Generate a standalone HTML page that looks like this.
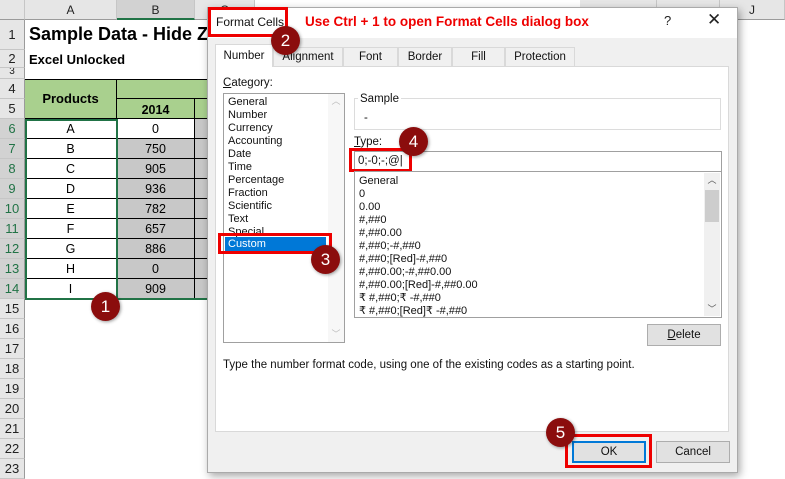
<!DOCTYPE html>
<html><head><meta charset="utf-8"><style>
*{margin:0;padding:0;box-sizing:border-box}
body{width:785px;height:479px;overflow:hidden;background:#fff;font-family:"Liberation Sans",sans-serif;position:relative}
.a{position:absolute}
.rh{position:absolute;left:0;width:25px;background:#e6e6e6;border-bottom:1px solid #c6c6c6;border-right:1px solid #9b9b9b;color:#222;font-size:13px;text-align:center}
.ch{position:absolute;top:0;height:20px;background:#e6e6e6;border-right:1px solid #c6c6c6;border-bottom:1px solid #9b9b9b;font-size:12px;text-align:center;line-height:20px;color:#222}
.cell{position:absolute;font-size:12.5px;text-align:center;line-height:20px;border-bottom:1px solid #000;border-right:1px solid #000}
.d{font-size:11.5px;color:#111}
.li{position:absolute;left:4px;font-size:11px;line-height:13px;color:#111;white-space:nowrap}
.circ{position:absolute;width:29px;height:29px;border-radius:50%;background:#8b0d0d;color:#fff;font-size:17px;text-align:center;line-height:29px;box-shadow:1px 1px 3px rgba(0,0,0,.4)}
.tab{position:absolute;top:47px;height:19px;border:1px solid #d9d9d9;border-bottom:none;background:#f0f0f0;font-size:11.5px;text-align:center;line-height:18px;color:#111}
</style></head><body>
<div class="ch" style="left:0;width:25px;background:#e6e6e6"></div>
<div class="ch" style="left:25px;width:92px">A</div>
<div class="ch" style="left:117px;width:78px;background:#d2d2d2;border-bottom:2px solid #217346">B</div>
<div class="ch" style="left:195px;width:60px">C</div>
<div class="ch" style="left:580px;width:77px"></div>
<div class="ch" style="left:657px;width:63px"></div>
<div class="ch" style="left:720px;width:65px">J</div>
<div class="rh" style="top:20px;height:30px;line-height:30px">1</div>
<div class="rh" style="top:50px;height:18px;line-height:18px">2</div>
<div class="rh" style="top:68px;height:11px;line-height:8px;overflow:hidden;font-size:10px">3</div>
<div class="rh" style="top:79px;height:20px;line-height:20px">4</div>
<div class="rh" style="top:99px;height:20px;line-height:20px">5</div>
<div class="rh" style="top:119px;height:20px;line-height:20px;background:#d2d2d2;color:#217346">6</div>
<div class="rh" style="top:139px;height:20px;line-height:20px;background:#d2d2d2;color:#217346">7</div>
<div class="rh" style="top:159px;height:20px;line-height:20px;background:#d2d2d2;color:#217346">8</div>
<div class="rh" style="top:179px;height:20px;line-height:20px;background:#d2d2d2;color:#217346">9</div>
<div class="rh" style="top:199px;height:20px;line-height:20px;background:#d2d2d2;color:#217346">10</div>
<div class="rh" style="top:219px;height:20px;line-height:20px;background:#d2d2d2;color:#217346">11</div>
<div class="rh" style="top:239px;height:20px;line-height:20px;background:#d2d2d2;color:#217346">12</div>
<div class="rh" style="top:259px;height:20px;line-height:20px;background:#d2d2d2;color:#217346">13</div>
<div class="rh" style="top:279px;height:20px;line-height:20px;background:#d2d2d2;color:#217346">14</div>
<div class="rh" style="top:299px;height:20px;line-height:20px">15</div>
<div class="rh" style="top:319px;height:20px;line-height:20px">16</div>
<div class="rh" style="top:339px;height:20px;line-height:20px">17</div>
<div class="rh" style="top:359px;height:20px;line-height:20px">18</div>
<div class="rh" style="top:379px;height:20px;line-height:20px">19</div>
<div class="rh" style="top:399px;height:20px;line-height:20px">20</div>
<div class="rh" style="top:419px;height:20px;line-height:20px">21</div>
<div class="rh" style="top:439px;height:20px;line-height:20px">22</div>
<div class="rh" style="top:459px;height:20px;line-height:20px">23</div>
<div class="a" style="left:29px;top:24px;font-size:18px;font-weight:bold;white-space:nowrap">Sample Data - Hide Z</div>
<div class="a" style="left:29px;top:52px;font-size:13px;font-weight:bold">Excel Unlocked</div>
<div class="a" style="left:25px;top:79px;width:92px;height:40px;background:#a9d08e;border:1px solid #000;border-left:none;font-size:13px;font-weight:bold;text-align:center;line-height:38px">Products</div>
<div class="a" style="left:117px;top:79px;width:110px;height:20px;background:#a9d08e;border-top:1px solid #000;border-bottom:1px solid #000"></div>
<div class="a" style="left:117px;top:99px;width:78px;height:20px;background:#a9d08e;border-right:1px solid #000;border-bottom:1px solid #000;font-size:12.5px;font-weight:bold;text-align:center;line-height:22px">2014</div>
<div class="a" style="left:195px;top:99px;width:30px;height:20px;background:#a9d08e;border-bottom:1px solid #000"></div>
<div id="rows"></div>
<script>
var p=["A","B","C","D","E","F","G","H","I"],v=["0","750","905","936","782","657","886","0","909"],h="";
for(var i=0;i<9;i++){var t=119+i*20;
h+='<div class="cell" style="left:25px;top:'+t+'px;width:92px;height:20px">'+p[i]+'</div>';
h+='<div class="cell" style="left:117px;top:'+t+'px;width:78px;height:20px;background:'+(i==0?'#fff':'#c8c8c8')+'">'+v[i]+'</div>';
h+='<div class="cell" style="left:195px;top:'+t+'px;width:30px;height:20px;background:#c8c8c8;border-right:none"></div>';}
document.getElementById("rows").innerHTML=h;
</script>
<div class="a" style="left:25px;top:119px;width:93px;height:181px;border:2px solid #217346"></div>
<div class="a" style="left:117px;top:119px;width:100px;height:181px;border-bottom:2px solid #217346"></div>
<div class="a" style="left:207px;top:7px;width:531px;height:466px;background:#f0f0f0;border:1px solid #aaa;box-shadow:2px 3px 8px rgba(0,0,0,.35)">
 <div class="a" style="left:0;top:0;width:529px;height:30px;background:#fff"></div>
</div>
<div class="a" style="left:208px;top:7px;width:80px;height:30px;border:3px solid #ee0000"></div>
<div class="a" style="left:216px;top:15px;font-size:12px;color:#111">Format Cells</div>
<div class="a" style="left:305px;top:14px;font-size:13.5px;font-weight:bold;color:#e00;white-space:nowrap">Use Ctrl + 1 to open Format Cells dialog box</div>
<div class="a" style="left:664px;top:13px;font-size:13px;color:#222">?</div>
<div class="a" style="left:707px;top:10px;font-size:17px;color:#222">✕</div>
<div class="tab" style="left:273px;width:70px">Alignment</div>
<div class="tab" style="left:343px;width:55px">Font</div>
<div class="tab" style="left:398px;width:54px">Border</div>
<div class="tab" style="left:452px;width:53px">Fill</div>
<div class="tab" style="left:505px;width:70px">Protection</div>
<div class="a" style="left:215px;top:66px;width:514px;height:366px;background:#fff;border:1px solid #d9d9d9"></div>
<div class="tab" style="left:215px;top:44px;width:58px;height:23px;background:#fff;line-height:22px">Number</div>
<div class="a d" style="left:223px;top:77px"><u>C</u>ategory:</div>
<div class="a" style="left:223px;top:93px;width:122px;height:250px;border:1px solid #a0a0a0;background:#fff">
 <div class="li" style="top:2px">General</div><div class="li" style="top:15px">Number</div><div class="li" style="top:28px">Currency</div><div class="li" style="top:41px">Accounting</div><div class="li" style="top:54px">Date</div><div class="li" style="top:67px">Time</div><div class="li" style="top:80px">Percentage</div><div class="li" style="top:93px">Fraction</div><div class="li" style="top:106px">Scientific</div><div class="li" style="top:119px">Text</div><div class="li" style="top:132px">Special</div>
 <div class="a" style="left:1px;top:143px;width:101px;height:14px;background:#0078d7"></div>
 <div class="li" style="top:144px;color:#fff">Custom</div>
 <div class="a" style="left:104px;top:0;width:16px;height:248px;background:#f7f7f7;color:#bbb;font-size:9px;text-align:center">︿<div style="position:absolute;bottom:2px;width:16px">﹀</div></div>
</div>
<div class="a" style="left:218px;top:233px;width:114px;height:21px;border:3px solid #ee0000"></div>
<div class="a" style="left:354px;top:98px;width:367px;height:32px;border:1px solid #dcdcdc"></div>
<div class="a d" style="left:358px;top:93px;background:#fff;padding:0 2px">Sample</div>
<div class="a d" style="left:364px;top:112px">-</div>
<div class="a d" style="left:354px;top:136px"><u>T</u>ype:</div>
<div class="a" style="left:354px;top:151px;width:368px;height:21px;border:1px solid #a0a0a0;background:#fff"></div>
<div class="a d" style="left:358px;top:155px">0;-0;-;@|</div>
<div class="a" style="left:349px;top:148px;width:63px;height:24px;border:3px solid #ee0000"></div>
<div class="a" style="left:354px;top:171px;width:368px;height:147px;border:1px solid #a0a0a0;background:#fff">
 <div class="li" style="top:3px">General</div><div class="li" style="top:16px">0</div><div class="li" style="top:29px">0.00</div><div class="li" style="top:42px">#,##0</div><div class="li" style="top:55px">#,##0.00</div><div class="li" style="top:68px">#,##0;-#,##0</div><div class="li" style="top:81px">#,##0;[Red]-#,##0</div><div class="li" style="top:94px">#,##0.00;-#,##0.00</div><div class="li" style="top:107px">#,##0.00;[Red]-#,##0.00</div><div class="li" style="top:120px">₹ #,##0;₹ -#,##0</div><div class="li" style="top:133px">₹ #,##0;[Red]₹ -#,##0</div>
 <div class="a" style="left:349px;top:1px;width:16px;height:143px;background:#f0f0f0;color:#555;font-size:9px;text-align:center">︿<div style="position:absolute;top:17px;left:1px;width:14px;height:32px;background:#cdcdcd"></div><div style="position:absolute;bottom:1px;width:16px">﹀</div></div>
</div>
<div class="a d" style="left:647px;top:324px;width:74px;height:22px;border:1px solid #adadad;background:#e1e1e1;text-align:center;line-height:20px"><u>D</u>elete</div>
<div class="a d" style="left:223px;top:359px;white-space:nowrap">Type the number format code, using one of the existing codes as a starting point.</div>
<div class="a" style="left:565px;top:434px;width:87px;height:34px;border:3px solid #ee0000"></div>
<div class="a d" style="left:572px;top:441px;width:74px;height:22px;border:2px solid #0078d7;background:#e1e1e1;text-align:center;line-height:18px">OK</div>
<div class="a d" style="left:656px;top:441px;width:74px;height:22px;border:1px solid #adadad;background:#e1e1e1;text-align:center;line-height:20px">Cancel</div>
<div class="circ" style="left:91px;top:292px">1</div>
<div class="circ" style="left:271px;top:26px">2</div>
<div class="circ" style="left:311px;top:245px">3</div>
<div class="circ" style="left:399px;top:127px">4</div>
<div class="circ" style="left:546px;top:418px">5</div>
</body></html>
